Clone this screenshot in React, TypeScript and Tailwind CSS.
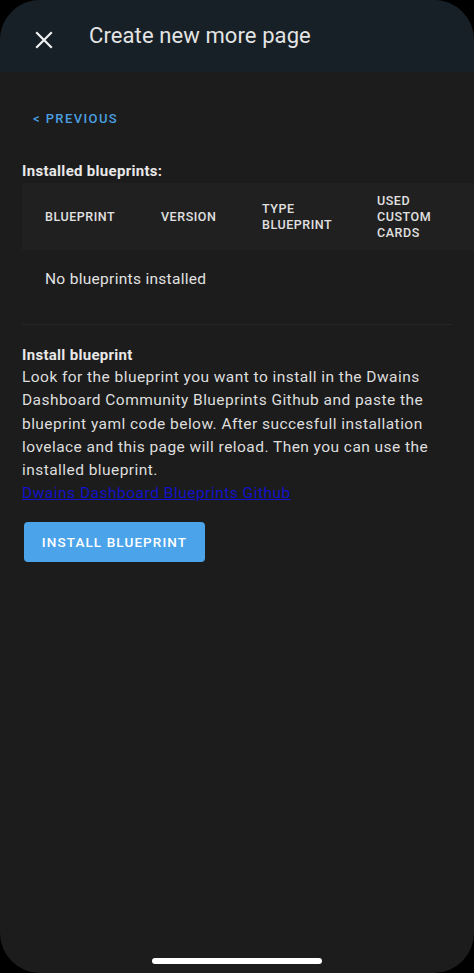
import React from "react";

export default function App() {
  return (
    <div className="w-[474px] h-[973px] bg-black" style={{ fontFamily: "Roboto, 'Liberation Sans', sans-serif" }}>
      <div className="relative w-full h-full rounded-[40px] overflow-hidden bg-[#1c1c1c] flex flex-col">
        <div className="h-[72px] bg-[#172026] flex items-center shrink-0">
          <div className="w-[89px] flex justify-center pt-[8px]">
            <svg width="18" height="18" viewBox="0 0 18 18" className="ml-[-2px]">
              <path d="M2 2 L16 16 M16 2 L2 16" stroke="#f0f0f0" strokeWidth="2.2" strokeLinecap="square" />
            </svg>
          </div>
          <div className="text-[22px] text-[#e4e4e4] tracking-[0.1px] mt-[-1px]">Create new more page</div>
        </div>

        <div className="px-[22px] flex flex-col">
          <div className="mt-[37px] pl-[11px] text-[13px] font-medium tracking-[1.4px] text-[#4a9fe0]">&lt; PREVIOUS</div>

          <div className="mt-[31px] text-[15px] font-bold text-[#e8e8e8] tracking-[0.3px]">Installed blueprints:</div>

          <div className="mt-[1px] mr-[-22px]">
            <div className="bg-[#202020] h-[67px] grid grid-cols-[116px_101px_115px_1fr] items-center pl-[23px] pt-[1px] text-[12.5px] font-medium tracking-[0.55px] text-[#e0e0e0] leading-[16px]">
              <div>BLUEPRINT</div>
              <div>VERSION</div>
              <div>TYPE<br />BLUEPRINT</div>
              <div>USED<br />CUSTOM<br />CARDS</div>
            </div>
            <div className="h-[74px] pt-[18px] pl-[23px] text-[15.5px] leading-[22px] text-[#e2e2e2] tracking-[0.3px]">
              No blueprints installed
            </div>
          </div>
          <div className="h-[1px] bg-[#262626]" />

          <div className="mt-[19px] text-[15px] font-bold text-[#e8e8e8] tracking-[0.3px] leading-[22px]">Install blueprint</div>
          <div className="text-[15.5px] text-[#dedede] leading-[23.3px] tracking-[0.45px]">
            Look for the blueprint you want to install in the Dwains Dashboard Community Blueprints Github and paste the blueprint yaml code below. After succesfull installation lovelace and this page will reload. Then you can use the installed blueprint.
          </div>
          <a className="text-[15.5px] leading-[23px] text-[#1212c8] underline tracking-[0.5px] self-start">Dwains Dashboard Blueprints Github</a>

          <button className="mt-[17px] ml-[2px] w-[181px] h-[40px] rounded-[4px] bg-[#4ba3e9] text-white text-[13.5px] font-medium tracking-[1.1px] self-start">
            INSTALL BLUEPRINT
          </button>
        </div>

        <div className="absolute left-[152px] top-[958px] w-[170px] h-[6px] rounded-full bg-white" />
      </div>
    </div>
  );
}
